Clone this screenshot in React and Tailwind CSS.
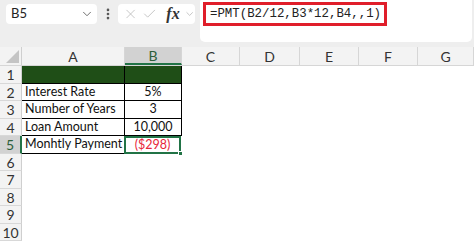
import { ChevronDown, EllipsisVertical, X, Check } from 'lucide-react'

const cols = [
    { name: 'A', w: 'w-[103px]' },
    { name: 'B', w: 'w-[57px]' },
    { name: 'C', w: 'w-[58px]' },
    { name: 'D', w: 'w-[60px]' },
    { name: 'E', w: 'w-[59px]' },
    { name: 'F', w: 'w-[59px]' },
    { name: 'G', w: 'flex-1' },
]

const rowHeights = ['h-[18px]', 'h-[17px]', 'h-[18px]', 'h-[17px]', 'h-[18px]', 'h-[17px]', 'h-[18px]', 'h-[17px]', 'h-[18px]', 'h-[17px]']

const data = {
    2: ['Interest Rate', '5%'],
    3: ['Number of Years', '3'],
    4: ['Loan Amount', '10,000'],
    5: ['Monhtly Payment', '($298)'],
}

function Toolbar() {
    return (
        <div className="h-[47px] bg-[#eeeeee] flex items-start">
            <div className="mt-[4px] ml-[6px] w-[91px] h-[20px] bg-white rounded-[4px] flex items-center justify-between pl-[5px] pr-[3px]">
                <span className="text-[13px] text-[#222]">B5</span>
                <ChevronDown size={14} strokeWidth={1.6} className="text-[#666]" />
            </div>
            <div className="mt-[7px] w-[21px] flex justify-center">
                <EllipsisVertical size={14} strokeWidth={2.6} className="text-[#555]" />
            </div>
            <div className="mt-[4px] w-[77px] h-[20px] bg-white rounded-[4px] flex items-center pl-[5px] gap-[4px]">
                <X size={16} strokeWidth={1.2} className="text-[#b5b5b5]" />
                <Check size={16} strokeWidth={1.2} className="text-[#b5b5b5]" />
                <span className="ml-[5px] text-[16px] italic font-bold text-[#333] font-['Liberation_Serif',serif]">fx</span>
                <ChevronDown size={12} strokeWidth={1.4} className="text-[#aaa]" />
            </div>
            <div className="ml-[5px] flex-1 mr-[2px] h-[42px] bg-white rounded-b-[5px] rounded-tl-[2px] pt-[2px] pl-[3px]">
                <div className="w-[184px] h-[24px] border-[3px] border-[#e01e2a] flex items-center pl-[4px]">
                    <span className="text-[12.4px] text-[#222] font-['Liberation_Mono',monospace] whitespace-nowrap">=PMT(B2/12,B3*12,B4,,1)</span>
                </div>
            </div>
        </div>
    )
}

function HeaderRow() {
    return (
        <div className="h-[19px] flex bg-[#f3f3f3] border-b border-[#d6d6d6]">
            <div className="w-[22px] border-r border-[#cfcfcf] flex items-end justify-end pr-[2px] pb-[2px]">
                <div className="w-0 h-0 border-l-[13px] border-l-transparent border-b-[13px] border-b-[#c4c4c4]" />
            </div>
            {cols.map((c) => (
                <div
                    key={c.name}
                    className={`${c.w} flex items-center justify-center text-[14px] border-r border-[#d6d6d6] ${c.name === 'B' ? 'bg-[#d2d2d2] text-[#2d5e3a] border-b-2 border-b-[#217346]' : 'text-[#333]'}`}
                >
                    {c.name}
                </div>
            ))}
        </div>
    )
}

function Row({ n }) {
    const h = rowHeights[n - 1]
    const inTable = n <= 5
    const row = data[n]
    const active = n === 5
    return (
        <div className={`${h} flex`}>
            <div className={`w-[22px] flex items-center justify-center text-[14px] border-b border-[#d8d8d8] ${active ? 'bg-[#d2d2d2] text-[#2d5e3a] border-r-2 border-r-[#217346]' : 'bg-[#f3f3f3] text-[#333] border-r border-r-[#cfcfcf]'}`}>
                {n}
            </div>
            {inTable ? (
                <>
                    <div className={`w-[103px] flex items-center pl-[3px] border-r border-b border-black text-[12.5px] text-[#111] whitespace-nowrap ${n === 1 ? 'bg-[#1f4e17]' : ''}`}>
                        {row ? row[0] : ''}
                    </div>
                    {active ? (
                        <div className="w-[57px] relative flex items-center justify-center border-2 border-[#217346] text-[12.5px] text-[#e8263a] -ml-px">
                            {row[1]}
                            <div className="absolute -right-[4px] -bottom-[4px] w-[5px] h-[5px] bg-[#217346] border border-white" />
                        </div>
                    ) : (
                        <div className={`w-[57px] flex items-center justify-center border-r border-b border-black text-[12.5px] text-[#111] ${n === 1 ? 'bg-[#1f4e17]' : ''}`}>
                            {row ? row[1] : ''}
                        </div>
                    )}
                </>
            ) : null}
            <div className="flex-1 bg-white" />
        </div>
    )
}

export default function App() {
    return (
        <div className="w-[474px] h-[241px] overflow-hidden bg-white font-['Lato',sans-serif]">
            <Toolbar />
            <HeaderRow />
            {[1, 2, 3, 4, 5, 6, 7, 8, 9, 10].map((n) => (
                <Row key={n} n={n} />
            ))}
        </div>
    )
}
